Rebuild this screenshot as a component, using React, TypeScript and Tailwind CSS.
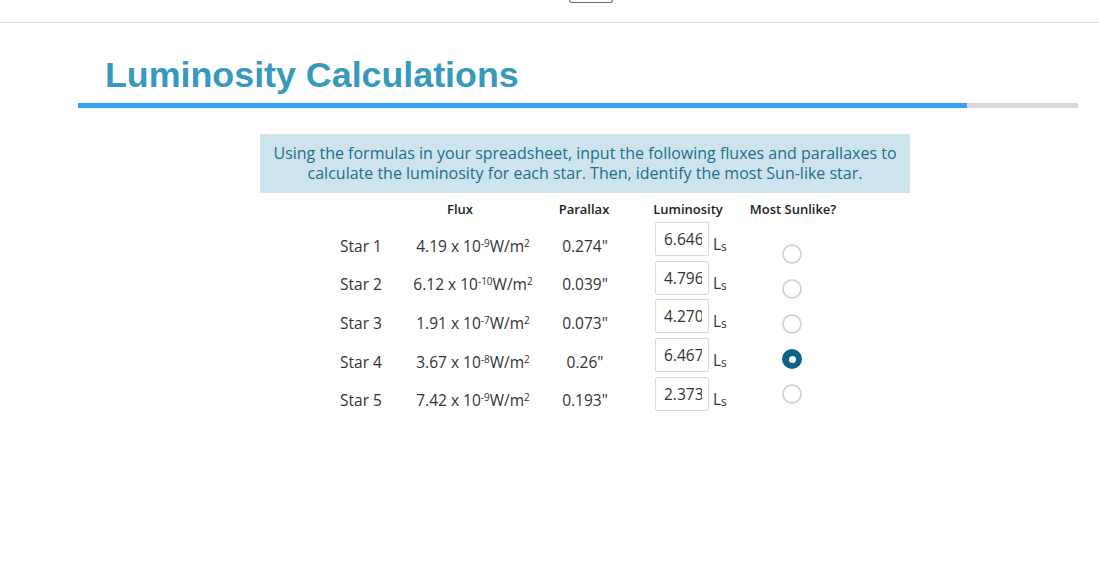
import React from 'react';

const stars = [
  { name: 'Star 1', flux: '4.19', exp: '-9', parallax: '0.274"', lum: '6.6463' },
  { name: 'Star 2', flux: '6.12', exp: '-10', parallax: '0.039"', lum: '4.7964' },
  { name: 'Star 3', flux: '1.91', exp: '-7', parallax: '0.073"', lum: '4.2703' },
  { name: 'Star 4', flux: '3.67', exp: '-8', parallax: '0.26"', lum: '6.4671' },
  { name: 'Star 5', flux: '7.42', exp: '-9', parallax: '0.193"', lum: '2.3733' },
];

const Radio: React.FC<{ checked?: boolean }> = ({ checked }) =>
  checked ? (
    <div className="w-[20px] h-[20px] rounded-full bg-[#0a6285] flex items-center justify-center">
      <div className="w-[7px] h-[7px] rounded-full bg-white" />
    </div>
  ) : (
    <div className="w-[20px] h-[20px] rounded-full border-2 border-[#d4d4d4] bg-white" />
  );

export default function App() {
  return (
    <div className="w-[1099px] h-[566px] bg-white overflow-hidden font-['Open_Sans',sans-serif] text-[#333]">
      {/* top strip */}
      <div className="h-[23px] border-b border-[#dcdcdc]">
        <div className="ml-[569px] w-[44px] h-[3px] border border-t-0 border-[#6b6b6b] rounded-b-[3px]" />
      </div>

      {/* title */}
      <h1 className="mt-[32px] pl-[105px] font-['Liberation_Sans',Arial,sans-serif] font-bold text-[35.8px] leading-[40px] text-[#3799bd]">
        Luminosity Calculations
      </h1>

      {/* progress bar */}
      <div className="mt-[8px] ml-[78px] w-[1000px] h-[5px] flex">
        <div className="w-[889px] bg-[#35a0f4]" />
        <div className="flex-1 bg-[#d8d8da]" />
      </div>

      {/* instructions */}
      <div className="mt-[26px] ml-[260px] w-[650px] h-[59px] bg-[#cde4ee] flex flex-col justify-center text-center text-[16px] leading-[19.5px] text-[#216e8d] whitespace-nowrap">
        <p>
          Using the formulas in your spreadsheet, input the following fluxes and parallaxes to
          <br />
          calculate the luminosity for each star. Then, identify the most Sun-like star.
        </p>
      </div>

      {/* header */}
      <div className="mt-[7px] pl-[330px] flex text-[13px] leading-[18px] font-semibold text-[#222]">
        <div className="w-[65px]" />
        <div className="w-[130px] text-center">Flux</div>
        <div className="w-[118px] text-center">Parallax</div>
        <div className="w-[90px] text-center">Luminosity</div>
        <div className="w-[120px] text-center">Most Sunlike?</div>
      </div>

      {/* rows */}
      <div className="mt-[4px] pl-[330px] flex">
        <div className="w-[452px]">
          {stars.map((s) => (
            <div key={s.name} className="h-[38.7px] flex items-start text-[15.5px] leading-[20px]">
              <div className="w-[62px] pt-[13.5px] text-center">{s.name}</div>
              <div className="w-[162px] pt-[13.5px] text-center whitespace-nowrap">
                {s.flux} x 10<sup className="text-[10px]">{s.exp}</sup>W/m<sup className="text-[10px]">2</sup>
              </div>
              <div className="w-[62px] pt-[13.5px] text-center">{s.parallax}</div>
              <input
                readOnly
                value={s.lum}
                className="ml-[39px] w-[54px] h-[34px] border border-[#dadada] rounded-[2px] pl-[8px] pr-[6px] text-[15.5px] text-[#333] font-['Open_Sans',sans-serif] outline-none"
              />
              <div className="ml-[4px] pt-[12px] text-[#333] whitespace-nowrap">
                L<span className="text-[12px] relative top-[1px]">s</span>
              </div>
            </div>
          ))}
        </div>
        <div className="pt-[22px] flex flex-col gap-[15px]">
          {stars.map((s, i) => (
            <Radio key={s.name} checked={i === 3} />
          ))}
        </div>
      </div>
    </div>
  );
}
